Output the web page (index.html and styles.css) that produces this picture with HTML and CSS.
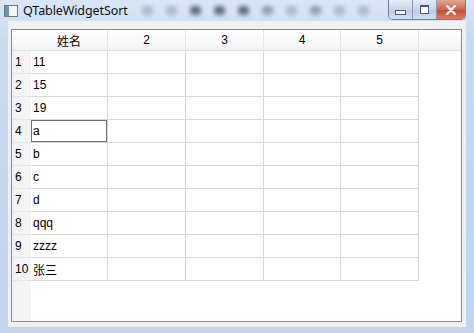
FILE: index.html
```html
<!DOCTYPE html>
<html lang="zh-CN">
<head>
    <meta charset="UTF-8">
    <title>QTableWidgetSort</title>
    <link rel="stylesheet" href="styles.css">
</head>
<body>
    <div class="window">
        <div class="titlebar">
            <div class="app-icon"><span></span></div>
            <span class="title">QTableWidgetSort</span>
            <div class="glass">
                <span class="blob light"></span>
                <span class="blob light"></span>
                <span class="blob dark"></span>
                <span class="blob dark"></span>
                <span class="blob dark"></span>
                <span class="blob"></span>
                <span class="blob light"></span>
                <span class="blob"></span>
                <span class="blob light"></span>
                <span class="blob light"></span>
            </div>
            <div class="caption-buttons">
                <div class="cap-btn min"><span></span></div>
                <div class="cap-btn max"><span></span></div>
                <div class="cap-btn close">
                    <svg width="12" height="10" viewBox="0 0 12 10">
                        <path d="M2 1 L10 9 M10 1 L2 9" stroke="#fff" stroke-width="2.4" stroke-linecap="round"/>
                    </svg>
                </div>
            </div>
        </div>
        <div class="client">
            <div class="table" id="table"></div>
        </div>
    </div>
    <script>
        const rows = ['11', '15', '19', 'a', 'b', 'c', 'd', 'qqq', 'zzzz', '张三'];
        const headers = ['姓名', '2', '3', '4', '5'];
        const table = document.getElementById('table');

        function cell(cls, text) {
            const div = document.createElement('div');
            div.className = cls;
            div.textContent = text || '';
            table.appendChild(div);
        }

        cell('corner');
        headers.forEach(h => cell('hcell', h));
        cell('hcell filler');

        rows.forEach((value, i) => {
            cell('vcell', String(i + 1));
            cell(i === 3 ? 'cell current' : 'cell', value);
            for (let c = 0; c < 4; c++) cell('cell');
            cell('blank');
        });

        cell('vcell rest');
        cell('blank rest-area');
    </script>
</body>
</html>
```

FILE: styles.css
```css
body {
    margin: 0;
    font-family: "Liberation Sans", "Noto Sans CJK SC", sans-serif;
    font-size: 12px;
    color: #000;
    background: #c6d9ef;
}

.window {
    width: 474px;
    height: 333px;
    display: flex;
    flex-direction: column;
    background: linear-gradient(to bottom, #d9e6f5 0px, #c9dbef 40px, #bfd4ec 100%);
    overflow: hidden;
}

.titlebar {
    height: 21px;
    display: flex;
    align-items: center;
    position: relative;
}

.app-icon {
    width: 12px;
    height: 10px;
    margin-left: 4px;
    margin-right: 5px;
    border: 1px solid #6a7a8c;
    background: #f4f6f8;
    display: flex;
}

.app-icon span {
    width: 4px;
    background: #7a8ea6;
}

.title {
    font-family: "Noto Sans", sans-serif;
    font-size: 12.5px;
    letter-spacing: -0.1px;
    color: #111;
}

.glass {
    display: flex;
    gap: 13px;
    margin-left: 14px;
    align-items: center;
}

.blob {
    width: 11px;
    height: 9px;
    border-radius: 4px;
    background: #8d9fb4;
    filter: blur(2px);
}

.blob.dark {
    background: #5e6f82;
}

.blob.light {
    background: #a8bbd0;
}

.caption-buttons {
    position: absolute;
    right: 8px;
    top: 0;
    display: flex;
    height: 19px;
    border: 1px solid #6f7f95;
    border-top: none;
    border-radius: 0 0 5px 5px;
    overflow: hidden;
}

.cap-btn {
    width: 23px;
    display: flex;
    align-items: center;
    justify-content: center;
    background: linear-gradient(to bottom, #e4edf7, #c6d6e9 50%, #b7cbe3 51%, #cfe0f2);
    border-right: 1px solid #8a9bb0;
}

.cap-btn.min span {
    width: 9px;
    height: 3px;
    margin-top: 6px;
    background: #fff;
    border: 1px solid #4a5a6e;
}

.cap-btn.max span {
    width: 7px;
    height: 6px;
    border: 1px solid #4a5a6e;
    border-top-width: 2px;
    background: #fff;
}

.cap-btn.close {
    width: 28px;
    border-right: none;
    background: linear-gradient(to bottom, #e3a69a, #cf6450 50%, #c2462f 51%, #d88066);
}

.client {
    flex: 1;
    margin: 0 8px 6px 8px;
    padding: 8px 4px 5px 3px;
    background: #f0f0f0;
    display: flex;
}

.table {
    flex: 1;
    border: 1px solid #8c8c8c;
    background: #fff;
    display: grid;
    grid-template-columns: 19px 77px 78px 78px 77px 78px 1fr;
    grid-template-rows: 21px repeat(10, 23px) 1fr;
}

.corner,
.hcell,
.vcell {
    background: linear-gradient(to bottom, #ffffff, #f2f3f5);
}

.hcell {
    border-right: 1px solid #e3e5e8;
    border-bottom: 1px solid #e0e2e5;
    display: flex;
    align-items: center;
    justify-content: center;
}

.hcell.filler {
    border-right: none;
}

.corner {
    border-bottom: 1px solid #e0e2e5;
}

.vcell {
    background: #f3f3f3;
    border-bottom: 1px solid #e6e6e6;
    display: flex;
    align-items: center;
    padding-left: 3px;
}

.vcell.rest {
    border-bottom: none;
}

.cell {
    border-right: 1px solid #d8d8d8;
    border-bottom: 1px solid #d8d8d8;
    display: flex;
    align-items: center;
    padding-left: 2px;
}

.cell.current {
    box-shadow: inset 0 0 0 1px #707070;
}

.rest-area {
    grid-column: 2 / 8;
}
```
